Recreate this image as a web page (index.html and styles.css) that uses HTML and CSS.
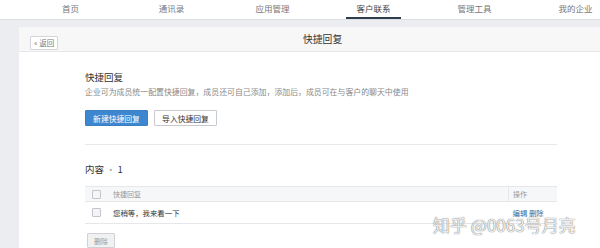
FILE: index.html
```html
<!DOCTYPE html>
<html>

<head>
    <title>快捷回复</title>
    <link rel="stylesheet" href="styles.css">
</head>

<body>
    <div class="top-nav">
        <a class="nav-item">首页</a>
        <a class="nav-item">通讯录</a>
        <a class="nav-item">应用管理</a>
        <a class="nav-item active"><span>客户联系</span></a>
        <a class="nav-item">管理工具</a>
        <a class="nav-item">我的企业</a>
    </div>

    <div class="main">
        <div class="panel">
            <div class="panel-head">
                <div><button class="back-btn">« 返回</button></div>
                <div class="panel-title">快捷回复</div>
            </div>

            <div class="panel-body">
                <div class="intro">
                    <h2>快捷回复</h2>
                    <p>企业可为成员统一配置快捷回复，成员还可自己添加，添加后，成员可在与客户的聊天中使用</p>
                    <div class="btn-row">
                        <button class="btn btn-blue">新建快捷回复</button>
                        <button class="btn btn-white">导入快捷回复</button>
                    </div>
                </div>

                <div class="count">内容<span class="dot">·</span>1</div>

                <table class="list">
                    <thead>
                        <tr>
                            <th class="col-check"><span class="check"></span></th>
                            <th>快捷回复</th>
                            <th class="col-act">操作</th>
                        </tr>
                    </thead>
                    <tbody>
                        <tr>
                            <td class="col-check"><span class="check"></span></td>
                            <td>您稍等，我来看一下</td>
                            <td class="col-act"><a>编辑</a> <a>删除</a></td>
                        </tr>
                    </tbody>
                </table>

                <button class="btn-del">删除</button>
            </div>
        </div>
    </div>

    <div class="watermark">知乎 @0063号月亮</div>
</body>

</html>
```

FILE: styles.css
```css
body {
    margin: 0;
    background-color: #ebedf0;
    font-family: "Noto Sans CJK SC", "Noto Sans", sans-serif;
    color: #333;
    overflow: hidden;
    height: 248px;
    position: relative;
}

.top-nav {
    display: flex;
    height: 19px;
    padding-left: 20px;
    background-color: #fff;
    border-bottom: 1px solid #dcdee2;
    overflow: hidden;
}

.nav-item {
    width: 101px;
    flex: none;
    text-align: center;
    font-size: 8.5px;
    line-height: 17px;
    color: #777;
}

.nav-item.active span {
    display: inline-block;
    padding: 0 10px;
    color: #444;
    border-bottom: 2px solid #2d3b4c;
}

.main {
    padding: 7px 0 0 19px;
}

.panel {
    height: 221px;
    background-color: #fff;
}

.panel-head {
    display: grid;
    grid-template-columns: 273px auto;
    align-items: center;
    height: 24px;
    padding: 0 11px;
    background-color: #f7f7f8;
    border-bottom: 1px solid #e6e7ea;
}

.back-btn {
    font-family: inherit;
    font-size: 7.5px;
    color: #777;
    background-color: #fff;
    border: 1px solid #d3d5d9;
    border-radius: 1px;
    padding: 0 3px;
    height: 14px;
    line-height: 12px;
}

.panel-title {
    font-size: 9.8px;
    color: #333;
}

.panel-body {
    padding: 0 43px 0 66px;
}

.intro {
    padding-top: 19px;
    padding-bottom: 18px;
    border-bottom: 1px solid #e8e9ec;
}

.intro h2 {
    margin: 0;
    font-size: 9.5px;
    line-height: 12px;
    font-weight: normal;
    color: #333;
}

.intro p {
    margin: 4px 0 0;
    font-size: 7.9px;
    line-height: 10px;
    color: #888;
}

.btn-row {
    display: flex;
    gap: 6px;
    margin-top: 13px;
}

.btn {
    font-family: inherit;
    font-size: 7.8px;
    height: 16px;
    padding: 0 7px;
    border-radius: 1px;
}

.btn-blue {
    width: 63px;
    background-color: #3c87cf;
    border: 1px solid #3a7fc2;
    color: #fff;
}

.btn-white {
    width: 63px;
    background-color: #fff;
    border: 1px solid #c8cacf;
    color: #333;
}

.count {
    margin-top: 17px;
    font-size: 9.5px;
    line-height: 14px;
    color: #333;
}

.count .dot {
    color: #aaa;
    margin: 0 2px;
}

table.list {
    width: 100%;
    border-collapse: collapse;
    margin-top: 10px;
}

table.list th {
    height: 14px;
    background-color: #f6f7f9;
    border-top: 1px solid #e6e7ea;
    border-bottom: 1px solid #e6e7ea;
    font-size: 7px;
    font-weight: normal;
    color: #999;
    text-align: left;
    padding: 0 4px;
}

table.list td {
    height: 21px;
    border-bottom: 1px solid #e6e7ea;
    font-size: 7.4px;
    line-height: 9px;
    color: #333;
    padding: 0 4px;
}

.col-check {
    width: 13px;
    padding-left: 7px !important;
}

.col-act {
    width: 40px;
}

th.col-act {
    border-left: 1px solid #e6e7ea;
}

.col-act a {
    color: #2f6a9e;
}

.check {
    display: block;
    width: 7px;
    height: 7px;
    border: 1px solid #c3c5ca;
    border-radius: 1px;
    background-color: #f4f5f7;
}

.btn-del {
    margin-top: 9px;
    margin-left: 2px;
    width: 28px;
    height: 15px;
    padding: 0;
    font-family: inherit;
    font-size: 7px;
    color: #999;
    background-color: #f0f1f3;
    border: 1px solid #cfd1d5;
    border-radius: 1px;
}

.watermark {
    position: absolute;
    left: 433px;
    top: 217px;
    font-size: 17px;
    line-height: 16px;
    color: rgba(255, 255, 255, 0.9);
    text-shadow: 0 0 1px rgba(60, 60, 60, 0.6), 0 0 1px rgba(60, 60, 60, 0.6);
    white-space: nowrap;
}
```
